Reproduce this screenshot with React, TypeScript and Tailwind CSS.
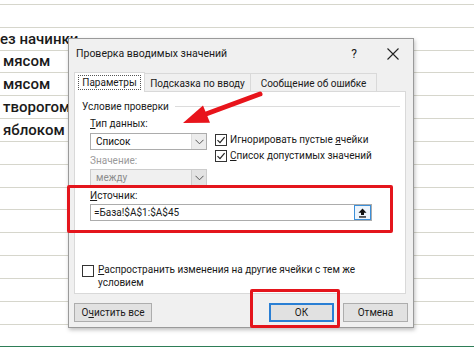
import React from "react";

const uiFont = { fontFamily: 'Roboto, "Noto Sans", sans-serif' };

function Check({ checked }: { checked?: boolean }) {
  return (
    <span className="w-[12px] h-[12px] border border-[#333] bg-white flex items-center justify-center shrink-0">
      {checked && (
        <svg width="10" height="10" viewBox="0 0 10 10">
          <path d="M1.5 5.2 L4 7.7 L8.6 2.2" fill="none" stroke="#222" strokeWidth="1.2" />
        </svg>
      )}
    </span>
  );
}

function Chevron() {
  return (
    <svg width="9" height="6" viewBox="0 0 9 6">
      <path d="M0.5 0.8 L4.5 4.8 L8.5 0.8" fill="none" stroke="#555" strokeWidth="1" />
    </svg>
  );
}

function Select({ value, disabled }: { value: string; disabled?: boolean }) {
  return (
    <div
      className={`w-[117px] h-[17px] border flex items-stretch ${
        disabled ? "border-[#cccccc] bg-[#f0f0f0] text-[#8d8d8d]" : "border-[#acacac] bg-white text-[#111]"
      }`}
    >
      <span className="flex-1 pl-[5px] leading-[15px]">{value}</span>
      <span
        className={`w-[15px] border-l flex items-center justify-center ${
          disabled ? "border-[#cccccc] bg-[#e3e3e3]" : "border-[#dcdcdc] bg-[#ececec]"
        }`}
      >
        <Chevron />
      </span>
    </div>
  );
}

export default function App() {
  const rows: { h: string; text?: string; pl?: string }[] = [
    { h: "h-[23px]", text: "ез начинки", pl: "pl-0" },
    { h: "h-[22px]", text: "мясом", pl: "pl-[3px]" },
    { h: "h-[23px]", text: "мясом", pl: "pl-[3px]" },
    { h: "h-[23px]", text: "творогом", pl: "pl-[3px]" },
    { h: "h-[23px]", text: "яблоком", pl: "pl-[3px]" },
    { h: "h-[23px]" },
    { h: "h-[23px]" },
    { h: "h-[22px]" },
    { h: "h-[23px]" },
    { h: "h-[23px]" },
    { h: "h-[23px]" },
    { h: "h-[23px]" },
    { h: "h-[23px]" },
  ];

  return (
    <div className="relative w-[474px] h-[348px] bg-white overflow-hidden">
      {/* Sheet */}
      <div className="flex flex-col" style={uiFont}>
        <div className="h-[5px] border-b border-[#d6d6cc]" />
        <div className="h-[23px] border-b border-[#d6d6cc]" />
        {rows.map((r, i) => (
          <div
            key={i}
            className={`${r.h} border-b border-[#d6d6cc] ${r.pl ?? ""} text-[15px] leading-[21px] text-[#1a1a1a] font-medium whitespace-nowrap flex items-end`}
          >
            {r.text}
          </div>
        ))}
        <div className="h-[22px] border-b border-[#2e7d57]" />
        <div className="h-[22px] border-b-[3px] border-[#5e9e7e]" />
      </div>

      {/* Dialog */}
      <div
        className="absolute left-[68px] top-[38px] w-[346px] h-[290px] bg-[#f0f0f0] border border-[#9a9a9a] shadow-[1px_2px_4px_rgba(0,0,0,0.25)] flex flex-col text-[10px] text-[#1a1a1a] whitespace-nowrap"
        style={uiFont}
      >
        <div className="h-[29px] flex items-center pl-[7px] pr-[14px]">
          <span className="flex-1 text-[10.5px]">Проверка вводимых значений</span>
          <span className="text-[12px] mr-[30px]">?</span>
          <svg width="12" height="12" viewBox="0 0 12 12">
            <path d="M0.5 0.5 L11.5 11.5 M11.5 0.5 L0.5 11.5" stroke="#222" strokeWidth="1.1" />
          </svg>
        </div>

        {/* Tabs */}
        <div className="flex items-end h-[22px] px-[5px] mt-[2px]">
          <div className="w-[71px] h-[20px] bg-white border border-b-0 border-[#d9d9d9] flex items-center justify-center relative z-10">
            <span className="border border-dotted border-[#555] px-[3px] leading-[13px]">Параметры</span>
          </div>
          <div className="w-[106px] h-[19px] bg-[#f0f0f0] border border-l-0 border-b-0 border-[#d9d9d9] flex items-center justify-center">
            Подсказка по вводу
          </div>
          <div className="w-[126px] h-[19px] bg-[#f0f0f0] border border-l-0 border-b-0 border-[#d9d9d9] flex items-center justify-center">
            Сообщение об ошибке
          </div>
        </div>

        {/* Panel */}
        <div className="ml-[5px] mr-[7px] h-[203px] shrink-0 bg-white border border-[#d9d9d9] -mt-px flex flex-col pl-[7px] pr-[5px]">
          <div className="flex items-center mt-[6px] h-[16px]">
            <span className="text-[#222]">Условие проверки</span>
            <span className="flex-1 ml-[6px] h-px bg-[#dcdcdc]" />
          </div>

          <div className="flex mt-[3px] pl-[8px]">
            <div className="flex flex-col w-[125px]">
              <span className="h-[14px] leading-[14px]">
                <span className="underline">Т</span>ип данных:
              </span>
              <div className="mt-[2px]">
                <Select value="Список" />
              </div>
              <span className="mt-[4px] h-[14px] leading-[14px] text-[#9a9a9a]">Значение:</span>
              <div className="mt-[1px]">
                <Select value="между" disabled />
              </div>
            </div>
            <div className="flex flex-col mt-[17px] gap-[4px]">
              <div className="flex items-center gap-[3px]">
                <Check checked />
                <span className="leading-[12px]">
                  Игнорировать пустые <span className="underline">я</span>чейки
                </span>
              </div>
              <div className="flex items-center gap-[3px]">
                <Check checked />
                <span className="leading-[12px]">
                  <span className="underline">С</span>писок допустимых значений
                </span>
              </div>
            </div>
          </div>

          <div className="mt-[3px] pl-[8px]">
            <span className="h-[14px] leading-[14px] block">
              <span className="underline">И</span>сточник:
            </span>
            <div className="mt-[1px] w-[282px] h-[17px] border border-[#acacac] flex items-stretch">
              <span className="flex-1 pl-[3px] leading-[15px]">=База!$A$1:$A$45</span>
              <span className="w-[17px] border border-[#3c8fd8] bg-[#eef5fc] flex items-center justify-center">
                <svg width="9" height="10" viewBox="0 0 9 10">
                  <path d="M4.5 0.5 L8.5 4.8 L6 4.8 L6 7 L3 7 L3 4.8 L0.5 4.8 Z" fill="#111" />
                  <rect x="1" y="8.3" width="7" height="1.3" fill="#111" />
                </svg>
              </span>
            </div>
          </div>

          <div className="mt-[42px] flex items-start gap-[4px] whitespace-normal">
            <span className="mt-[2px]">
              <Check />
            </span>
            <span className="leading-[13px] w-[262px]">
              <span className="underline">Р</span>аспространить изменения на другие ячейки с тем же условием
            </span>
          </div>
        </div>

        {/* Buttons */}
        <div className="flex items-center mt-[9px] px-[5px]">
          <div className="w-[78px] h-[19px] bg-[#e1e1e1] border border-[#adadad] flex items-center justify-center">
            О<span className="underline">ч</span>истить все
          </div>
          <div className="flex-1" />
          <div className="w-[65px] h-[19px] bg-[#e1e1e1] border-2 border-[#2a7fd4] flex items-center justify-center">
            ОК
          </div>
          <div className="w-[65px] h-[19px] ml-[9px] bg-[#e1e1e1] border border-[#adadad] flex items-center justify-center">
            Отмена
          </div>
        </div>
      </div>

      {/* Annotations */}
      <div className="absolute left-[67px] top-[185px] w-[326px] h-[48px] border-[3px] border-[#e4151c] rounded-[2px]" />
      <div className="absolute left-[250px] top-[289px] w-[90px] h-[39px] border-[3px] border-[#e4151c] rounded-[2px]" />
      <svg className="absolute left-0 top-0" width="474" height="348" viewBox="0 0 474 348">
        <path d="M206 114 L260 94" stroke="#e8141b" strokeWidth="5" strokeLinecap="round" />
        <path d="M183 123 L203 105.5 L210 122.8 Z" fill="#e8141b" />
      </svg>
    </div>
  );
}
